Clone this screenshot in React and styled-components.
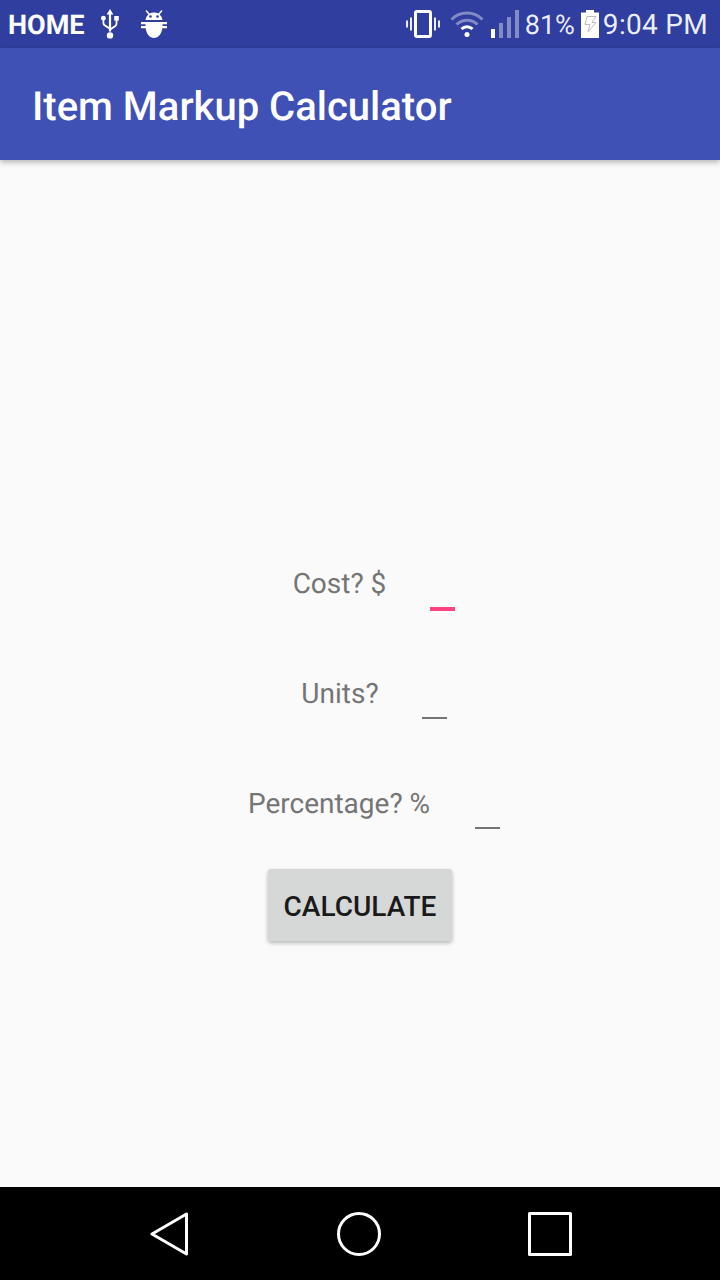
import React from "react"
import styled, { createGlobalStyle } from "styled-components"

const GlobalStyle = createGlobalStyle`
  html, body {
    margin: 0;
    padding: 0;
    background: #fafafa;
    font-family: Roboto, "Liberation Sans", sans-serif;
    text-rendering: geometricPrecision;
  }
`

const Screen = styled.div`
  width: 720px;
  height: 1280px;
  display: flex;
  flex-direction: column;
  overflow: hidden;
`

const StatusBar = styled.div`
  height: 48px;
  flex: none;
  display: flex;
  align-items: center;
  justify-content: space-between;
  padding: 0 12px 0 8px;
  background: #303f9f;
  color: #fff;
`

const StatusGroup = styled.div`
  display: flex;
  align-items: center;
`

const HomeLabel = styled.span`
  font-size: 27px;
  font-weight: 700;
  width: 93px;
  padding-top: 2px;
`

const StatusText = styled.span`
  font-size: ${props => props.$size || 27}px;
  letter-spacing: ${props => props.$spacing || 0}px;
  line-height: 48px;
  padding-top: 2px;
  margin: ${props => props.$margin || "0"};
  color: rgba(255, 255, 255, 0.92);
`

const Icon = styled.svg`
  display: block;
  flex: none;
  margin: ${props => props.$margin || "0"};
`

const AppBar = styled.header`
  height: 112px;
  box-sizing: border-box;
  flex: none;
  display: flex;
  align-items: center;
  padding: 4px 0 0 32px;
  background: #3f51b5;
  box-shadow: 0 2px 6px rgba(0, 0, 0, 0.3);
  position: relative;
`

const Title = styled.h1`
  margin: 0;
  font-size: 40px;
  font-weight: 500;
  color: #fff;
`

const Content = styled.main`
  flex: 1;
  display: flex;
  flex-direction: column;
  align-items: center;
  padding-top: 350px;
  background: #fafafa;
`

const Row = styled.div`
  width: 100%;
  height: 110px;
  box-sizing: border-box;
  display: flex;
  justify-content: center;
  align-items: flex-end;
  gap: ${props => props.$gap}px;
  padding: 0 0 11px 28px;
`

const Label = styled.label`
  font-size: 28px;
  line-height: 34px;
  margin-bottom: 8px;
  color: #757575;
`

const Field = styled.input`
  width: 25px;
  height: 20px;
  box-sizing: content-box;
  padding: 0;
  border: 0;
  border-bottom: ${props => (props.$active ? "4px solid #ff4081" : "2px solid #757575")};
  margin-bottom: ${props => (props.$active ? "-2px" : "0")};
  background: transparent;
  outline: none;
`

const Button = styled.button`
  width: 184px;
  height: 72px;
  margin-top: 29px;
  padding: 2px 0 0;
  border: 0;
  border-radius: 3px;
  background: #d6d7d7;
  box-shadow: 0 2px 4px rgba(0, 0, 0, 0.28);
  color: #1a1a1a;
  font-family: Roboto, "Liberation Sans", sans-serif;
  font-size: 28px;
  font-weight: 500;
`

const NavBar = styled.nav`
  height: 93px;
  flex: none;
  display: flex;
  align-items: center;
  padding-left: 150px;
  background: #000;
`

const fields = [
  { label: "Cost? $", gap: 44, active: true },
  { label: "Units?", gap: 43 },
  { label: "Percentage? %", gap: 45 },
]

function UsbIcon() {
  return (
    <Icon width="18" height="30" viewBox="0 0 18 30" fill="#fff">
      <path d="M9 0l3.4 5.4h-2.3v17.2H7.9V5.4H5.6z" />
      <circle cx="9" cy="26.4" r="3.2" />
      <rect x="13.2" y="7" width="4.6" height="4.6" />
      <circle cx="2.4" cy="9.2" r="2.4" />
      <path d="M1.5 11h1.8v2.6c0 1 .4 1.6 1.2 2.1L8 18v2.2l-4.5-2.9C2.2 16.5 1.5 15.3 1.5 13.7z" />
      <path d="M14.6 11h1.8v3.5c0 1.5-.6 2.6-1.9 3.4L10 21v-2.2l3.5-2.3c.8-.5 1.1-1.1 1.1-2z" />
    </Icon>
  )
}

function AndroidIcon() {
  return (
    <Icon width="26" height="28" viewBox="0 0 26 28" fill="#fff" $margin="0 0 0 22px">
      <path d="M5.5 0l3.1 3.5A9 9 0 0 1 13 2.5a9 9 0 0 1 4.4 1L20.5 0l1 .9-2.9 3.5A8.2 8.2 0 0 1 21.5 10h-17a8.2 8.2 0 0 1 2.9-5.6L4.500.9z" />
      <path d="M0 12h26v2.2H21.5V16H26v2.2h-4.6C20.500 24 17.300 28 13 28S5.500 24 4.600 18.200H0V16h4.500v-1.800H0z" />
      <circle cx="9.5" cy="6.5" r="1.3" fill="#303f9f" />
      <circle cx="16.5" cy="6.5" r="1.3" fill="#303f9f" />
    </Icon>
  )
}

function VibrateIcon() {
  return (
    <Icon width="34" height="28" viewBox="0 0 34 28" fill="none" stroke="#fff">
      <rect x="9.5" y="1.5" width="15" height="25" rx="1.5" strokeWidth="3" />
      <path d="M5 7.5v13M1 10.5v7M29 7.5v13M33 10.5v7" strokeWidth="1.8" />
    </Icon>
  )
}

function WifiIcon() {
  return (
    <Icon width="34" height="26" viewBox="0 0 34 26" fill="none" $margin="0 0 0 10px">
      <path d="M1.5 8.5a22 22 0 0 1 31 0" stroke="#fff" strokeOpacity="0.4" strokeWidth="3" />
      <path d="M6.5 13.5a15 15 0 0 1 21 0" stroke="#fff" strokeOpacity="0.4" strokeWidth="3" />
      <path d="M11.5 18a8 8 0 0 1 11 0" stroke="#fff" strokeWidth="3" />
      <circle cx="17" cy="23.5" r="2.5" fill="#fff" />
    </Icon>
  )
}

function SignalIcon() {
  return (
    <Icon width="28" height="28" viewBox="0 0 28 28" $margin="0 0 0 7px">
      <rect x="0" y="19" width="4" height="9" fill="#fff" />
      <rect x="8" y="13" width="4" height="15" fill="#fff" fillOpacity="0.4" />
      <rect x="16" y="7" width="4" height="21" fill="#fff" fillOpacity="0.4" />
      <rect x="24" y="0" width="4" height="28" fill="#fff" fillOpacity="0.4" />
    </Icon>
  )
}

function BatteryIcon() {
  return (
    <Icon width="18" height="28" viewBox="0 0 18 28" $margin="0 0 0 6px">
      <path d="M5 0h8v2.5h5V28H0V2.5h5z" fill="#fff" />
      <path d="M6 6.5h9l-4 6h4l-8 9.5 2-7.5H4z" fill="none" stroke="#bdbdbd" strokeWidth="1" />
    </Icon>
  )
}

function BackIcon() {
  return (
    <Icon width="40" height="44" viewBox="0 0 40 44" fill="none" stroke="#fff" strokeWidth="3" strokeLinejoin="round">
      <path d="M36.5 2v40L2 22z" />
    </Icon>
  )
}

function HomeIcon() {
  return (
    <Icon width="44" height="44" viewBox="0 0 44 44" fill="none" stroke="#fff" strokeWidth="3" $margin="0 0 0 147px">
      <circle cx="22" cy="22" r="20.5" />
    </Icon>
  )
}

function RecentIcon() {
  return (
    <Icon width="44" height="44" viewBox="0 0 44 44" fill="none" stroke="#fff" strokeWidth="3" strokeLinejoin="round" $margin="0 0 0 147px">
      <rect x="1.5" y="1.5" width="41" height="41" />
    </Icon>
  )
}

export default function App() {
  return (
    <Screen>
      <GlobalStyle />
      <StatusBar>
        <StatusGroup>
          <HomeLabel>HOME</HomeLabel>
          <UsbIcon />
          <AndroidIcon />
        </StatusGroup>
        <StatusGroup>
          <VibrateIcon />
          <WifiIcon />
          <SignalIcon />
          <StatusText $margin="0 0 0 6px">81%</StatusText>
          <BatteryIcon />
          <StatusText $size={28} $spacing={0.3} $margin="0 0 0 4px">9:04 PM</StatusText>
        </StatusGroup>
      </StatusBar>
      <AppBar>
        <Title>Item Markup Calculator</Title>
      </AppBar>
      <Content>
        {fields.map(field => (
          <Row key={field.label} $gap={field.gap}>
            <Label>{field.label}</Label>
            <Field $active={field.active} />
          </Row>
        ))}
        <Button>CALCULATE</Button>
      </Content>
      <NavBar>
        <BackIcon />
        <HomeIcon />
        <RecentIcon />
      </NavBar>
    </Screen>
  )
}
